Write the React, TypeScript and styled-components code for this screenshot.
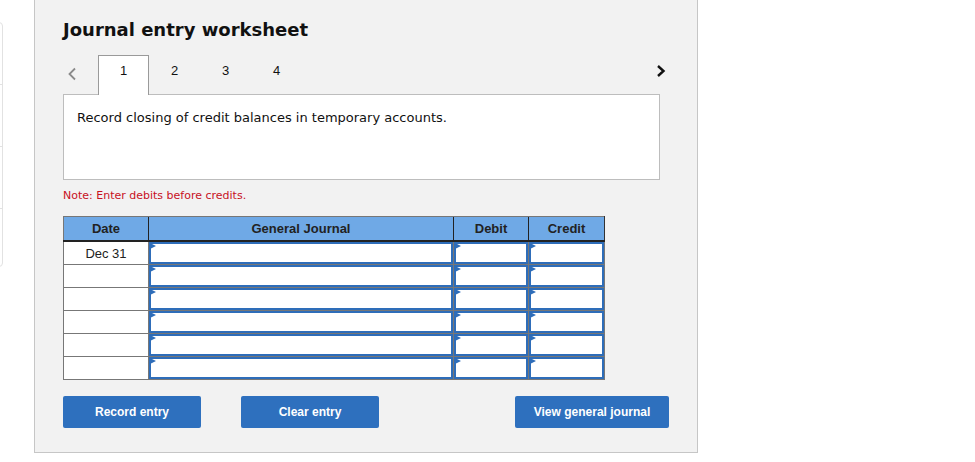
import React from "react";
import styled, { createGlobalStyle } from "styled-components";

const GlobalStyle = createGlobalStyle`
  body {
    margin: 0;
    background: #fff;
  }
`;

const rows = ["Dec 31", "", "", "", "", ""];

const App: React.FC = () => {
  return (
    <>
      <GlobalStyle />
      <Page>
        <SideStub>
          <SideItem />
          <SideItem />
          <SideItem />
          <SideItem $last />
        </SideStub>
        <Panel>
          <Title>Journal entry worksheet</Title>
          <TabBar>
            <TabGroup>
              <Chevron width="10" height="14" viewBox="0 0 10 14">
                <polyline points="8,1.5 2.5,7 8,12.5" stroke="#8a8a8a" strokeWidth="1.8" fill="none" />
              </Chevron>
              <Tab $active>1</Tab>
              <Tab>2</Tab>
              <Tab>3</Tab>
              <Tab>4</Tab>
            </TabGroup>
            <NextChevron width="12" height="14" viewBox="0 0 12 14">
              <polyline points="3,2 8.5,7 3,12" stroke="#111" strokeWidth="2.4" fill="none" />
            </NextChevron>
          </TabBar>
          <Prompt>Record closing of credit balances in temporary accounts.</Prompt>
          <Note>Note: Enter debits before credits.</Note>
          <Journal>
            <colgroup>
              <col style={{ width: 85 }} />
              <col style={{ width: 305 }} />
              <col style={{ width: 75 }} />
              <col style={{ width: 76 }} />
            </colgroup>
            <thead>
              <tr>
                <HeadCell>Date</HeadCell>
                <HeadCell>General Journal</HeadCell>
                <HeadCell>Debit</HeadCell>
                <HeadCell>Credit</HeadCell>
              </tr>
            </thead>
            <tbody>
              {rows.map((date, i) => (
                <tr key={i}>
                  <DateCell>{date}</DateCell>
                  <EntryCell>
                    <EntryInput />
                  </EntryCell>
                  <EntryCell>
                    <EntryInput />
                  </EntryCell>
                  <EntryCell>
                    <EntryInput />
                  </EntryCell>
                </tr>
              ))}
            </tbody>
          </Journal>
          <Actions>
            <ActionButton>Record entry</ActionButton>
            <ActionButton $gap>Clear entry</ActionButton>
            <ActionButton $wide>View general journal</ActionButton>
          </Actions>
        </Panel>
      </Page>
    </>
  );
};

const Page = styled.div`
  display: flex;
  align-items: flex-start;
  width: 975px;
  height: 462px;
  overflow: hidden;
`;

const SideStub = styled.div`
  flex: none;
  width: 200px;
  margin-left: -199px;
  margin-top: 22px;
  border: 1px solid #e2e2e2;
  border-radius: 4px;
  display: flex;
  flex-direction: column;
`;

const SideItem = styled.div<{ $last?: boolean }>`
  height: ${({ $last }) => ($last ? "57px" : "61px")};
  border-bottom: ${({ $last }) => ($last ? "none" : "1px solid #e2e2e2")};
`;

const Panel = styled.div`
  flex: none;
  margin-left: 31px;
  width: 634px;
  height: 452px;
  padding-left: 28px;
  background: #f2f2f2;
  border: 1px solid #c6c6c6;
  border-top: none;
  display: flex;
  flex-direction: column;
`;

const Title = styled.h1`
  margin: 19px 0 0;
  font-family: "DejaVu Sans", Verdana, sans-serif;
  font-size: 18px;
  font-weight: bold;
  color: #111;
  line-height: 22px;
`;

const TabBar = styled.div`
  margin-top: 14px;
  width: 597px;
  display: flex;
  align-items: flex-end;
  justify-content: space-between;
`;

const TabGroup = styled.div`
  display: flex;
  align-items: flex-end;
`;

const Chevron = styled.svg`
  display: block;
  margin: 0 4px 13px;
`;

const NextChevron = styled.svg`
  display: block;
  margin: 0 -7px 16px 0;
`;

const Tab = styled.div<{ $active?: boolean }>`
  width: 51px;
  height: 40px;
  box-sizing: border-box;
  display: flex;
  align-items: center;
  justify-content: center;
  padding-bottom: 10px;
  font-family: "Liberation Sans", Arial, sans-serif;
  font-size: 13px;
  color: #111;
  background: ${({ $active }) => ($active ? "#fff" : "transparent")};
  border: 1px solid ${({ $active }) => ($active ? "#9a9a9a" : "transparent")};
  border-bottom: none;
  margin-bottom: -1px;
  margin-left: ${({ $active }) => ($active ? "17px" : "0")};
  position: relative;
  z-index: 1;
`;

const Prompt = styled.div`
  width: 597px;
  height: 86px;
  box-sizing: border-box;
  padding: 15px 13px;
  background: #fff;
  border: 1px solid #bdbdbd;
  font-family: "DejaVu Sans", Verdana, sans-serif;
  font-size: 13px;
  line-height: 16px;
  color: #111;
`;

const Note = styled.div`
  margin-top: 9px;
  font-family: "DejaVu Sans", Verdana, sans-serif;
  font-size: 11px;
  line-height: 14px;
  color: #c8101e;
`;

const Journal = styled.table`
  margin-top: 13px;
  width: 542px;
  border-collapse: collapse;
  table-layout: fixed;
  font-family: "Liberation Sans", Arial, sans-serif;
  font-size: 13px;
  color: #222;
  border: 1px solid #777;
`;

const HeadCell = styled.th`
  height: 23px;
  padding: 0;
  background: #6fa9e6;
  font-weight: bold;
  text-align: center;
  border-top: 1px solid #777;
  border-left: 1px solid #222;
  border-bottom: 2px solid #222;
  &:first-child {
    border-left: 1px solid #777;
  }
  &:last-child {
    border-right: 1px solid #333;
  }
`;

const DateCell = styled.td`
  height: 22px;
  padding: 0;
  background: #fff;
  text-align: center;
  border: 1px solid #777;
`;

const EntryCell = styled.td`
  height: 22px;
  padding: 0;
  border: 1px solid #777;
  background: #fff;
`;

const EntryInput = styled.div`
  position: relative;
  height: 18px;
  border: 2px solid #2e6db9;
  background: #fff;
  &::before {
    content: "";
    position: absolute;
    left: -1px;
    top: -1px;
    border-top: 3.5px solid transparent;
    border-bottom: 3.5px solid transparent;
    border-left: 6px solid #2e6db9;
  }
`;

const Actions = styled.div`
  margin-top: 16px;
  width: 606px;
  display: flex;
`;

const ActionButton = styled.button<{ $gap?: boolean; $wide?: boolean }>`
  width: ${({ $wide }) => ($wide ? "154px" : "138px")};
  height: 32px;
  margin-left: ${({ $gap, $wide }) => ($wide ? "auto" : $gap ? "40px" : "0")};
  border: none;
  border-radius: 2px;
  background: #2e70be;
  color: #fff;
  font-family: "Liberation Sans", Arial, sans-serif;
  font-size: 12px;
  font-weight: bold;
  cursor: pointer;
`;

export default App;
